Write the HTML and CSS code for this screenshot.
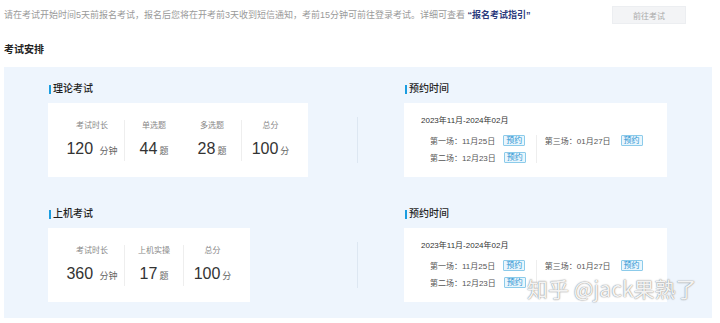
FILE: index.html
```html
<!DOCTYPE html>
<html lang="zh-CN">
<head>
    <meta charset="UTF-8">
    <meta name="viewport" content="width=device-width, initial-scale=1.0">
    <title>考试安排</title>
    <link rel="stylesheet" href="styles.css">
</head>
<body>
    <div class="page">
        <div class="topbar">
            <p class="notice">请在考试开始时间5天前报名考试，报名后您将在开考前3天收到短信通知，考前15分钟可前往登录考试。详细可查看 <a class="guide">“报名考试指引”</a></p>
            <button class="go-btn">前往考试</button>
        </div>
        <h2 class="section-title">考试安排</h2>
        <div class="panel">
            <div class="exam-row">
                <div class="exam-col">
                    <h3 class="block-title">理论考试</h3>
                    <div class="card stats">
                        <div class="stat first">
                            <span class="stat-label">考试时长</span>
                            <span class="stat-value">120 <small>分钟</small></span>
                        </div>
                        <div class="stat">
                            <span class="stat-label">单选题</span>
                            <span class="stat-value">44<small>题</small></span>
                        </div>
                        <div class="stat">
                            <span class="stat-label">多选题</span>
                            <span class="stat-value">28<small>题</small></span>
                        </div>
                        <div class="stat last">
                            <span class="stat-label">总分</span>
                            <span class="stat-value">100<small>分</small></span>
                        </div>
                    </div>
                </div>
                <div class="split"></div>
                <div class="book-col">
                    <h3 class="block-title">预约时间</h3>
                    <div class="card booking">
                        <div class="period">2023年11月-2024年02月</div>
                        <div class="sessions">
                            <div class="session-group">
                                <div class="session">第一场：11月25日<span class="tag">预约</span></div>
                                <div class="session">第二场：12月23日<span class="tag">预约</span></div>
                            </div>
                            <div class="session-group">
                                <div class="session">第三场：01月27日<span class="tag wide">预约</span></div>
                            </div>
                        </div>
                    </div>
                </div>
            </div>
            <div class="exam-row">
                <div class="exam-col">
                    <h3 class="block-title">上机考试</h3>
                    <div class="card stats">
                        <div class="stat first">
                            <span class="stat-label">考试时长</span>
                            <span class="stat-value">360 <small>分钟</small></span>
                        </div>
                        <div class="stat">
                            <span class="stat-label">上机实操</span>
                            <span class="stat-value">17<small>题</small></span>
                        </div>
                        <div class="stat last">
                            <span class="stat-label">总分</span>
                            <span class="stat-value">100<small>分</small></span>
                        </div>
                    </div>
                </div>
                <div class="split"></div>
                <div class="book-col">
                    <h3 class="block-title">预约时间</h3>
                    <div class="card booking">
                        <div class="period">2023年11月-2024年02月</div>
                        <div class="sessions">
                            <div class="session-group">
                                <div class="session">第一场：11月25日<span class="tag">预约</span></div>
                                <div class="session">第二场：12月23日<span class="tag">预约</span></div>
                            </div>
                            <div class="session-group">
                                <div class="session">第三场：01月27日<span class="tag wide">预约</span></div>
                            </div>
                        </div>
                    </div>
                </div>
            </div>
        </div>
        <div class="watermark">知乎 @jack果熟了</div>
    </div>
</body>
</html>
```
FILE: styles.css
```css
* {
    box-sizing: border-box;
}
body {
    margin: 0;
    font-family: "Liberation Sans", "Noto Sans CJK SC", sans-serif;
    background: #fff;
    color: #333;
}
.page {
    position: relative;
    padding: 6px 8px 0 4px;
}
.topbar {
    display: flex;
    align-items: center;
    justify-content: space-between;
    height: 18px;
    padding-right: 26px;
}
.notice {
    margin: 0;
    font-size: 9px;
    line-height: 18px;
    color: #9a9a9a;
}
.guide {
    color: #2c3a7c;
    font-weight: bold;
}
.go-btn {
    width: 74px;
    height: 18px;
    padding: 0;
    border: 1px solid #eceef1;
    background: #f3f4f6;
    color: #aaa;
    font-family: inherit;
    font-size: 8px;
}
.section-title {
    margin: 20px 0 11px;
    font-size: 10px;
    line-height: 12px;
    font-weight: bold;
    color: #222;
}
.panel {
    background: #eef5fd;
    padding: 16px 45px 16px 44px;
}
.exam-row {
    display: flex;
}
.exam-row + .exam-row {
    margin-top: 31px;
}
.exam-col {
    width: 309px;
}
.split {
    width: 1px;
    height: 46px;
    align-self: flex-end;
    margin-bottom: 14px;
    background: #dde7f2;
}
.book-col {
    flex: 1;
    padding-left: 46px;
}
.block-title {
    display: flex;
    align-items: center;
    margin: 0 0 8px;
    font-size: 10px;
    line-height: 12px;
    font-weight: 500;
    color: #1f1f1f;
}
.block-title::before {
    content: "";
    width: 2px;
    height: 9px;
    margin: 0 2px 0 1px;
    background: #1a9de0;
}
.card {
    height: 74px;
    background: #fff;
}
.stats {
    display: flex;
    align-items: center;
    width: max-content;
    padding: 0 9px 0 12px;
}
.stat {
    display: flex;
    flex-direction: column;
    align-items: center;
    width: 58px;
}
.stat.first {
    width: 65px;
    border-right: 1px solid #eee;
}
.stat.last {
    border-left: 1px solid #eee;
}
.stat-label {
    margin-bottom: 7px;
    font-size: 8px;
    line-height: 12px;
    color: #888;
}
.stat-value {
    font-size: 16px;
    line-height: 20px;
    color: #333;
}
.stat-value small {
    margin-left: 2px;
    font-size: 9px;
    color: #666;
}
.booking {
    padding: 13px 17px 0;
}
.period {
    font-size: 8px;
    line-height: 10px;
    color: #333;
}
.sessions {
    display: flex;
    margin: 9px 0 0 9px;
}
.session-group {
    display: flex;
    flex-direction: column;
    gap: 6px;
}
.session-group:first-child {
    padding-right: 10px;
    border-right: 1px solid #eee;
}
.session-group + .session-group {
    padding-left: 8px;
}
.session {
    display: flex;
    align-items: center;
    height: 11px;
    font-size: 8px;
    color: #555;
}
.tag {
    height: 11px;
    margin-left: 8px;
    padding: 0 2px;
    border: 1px solid #8ccbea;
    border-radius: 1px;
    background: #e9f6fd;
    color: #2a93d2;
    font-size: 8px;
    line-height: 9px;
}
.tag.wide {
    margin-left: 10px;
}
.watermark {
    position: absolute;
    left: 527px;
    top: 275px;
    font-family: "Noto Sans CJK SC", sans-serif;
    font-size: 21px;
    line-height: 26px;
    color: rgba(255, 255, 255, 0.92);
    text-shadow: 0 0 1px #777, 0 0 2px rgba(0, 0, 0, 0.25);
}
```
